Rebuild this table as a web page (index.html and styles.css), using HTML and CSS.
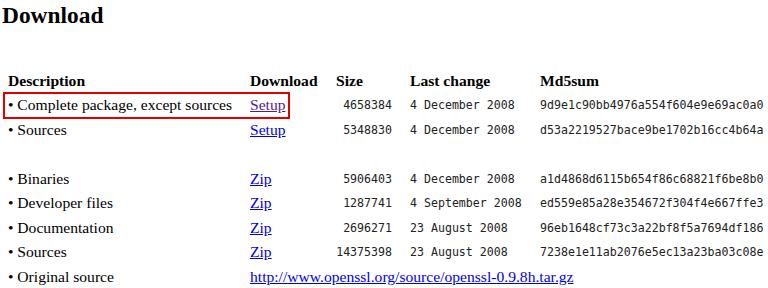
FILE: index.html
```html
<!DOCTYPE html>
<html>
<head>
<meta charset="utf-8">
<link rel="stylesheet" href="styles.css">
</head>
<body>
<h1 class="title">Download</h1>
<table class="dl">
  <colgroup>
    <col class="c-desc"><col class="c-dl"><col class="c-size"><col class="c-date"><col class="c-md5">
  </colgroup>
  <thead>
    <tr><th>Description</th><th>Download</th><th>Size</th><th>Last change</th><th>Md5sum</th></tr>
  </thead>
  <tbody>
    <tr><td>• Complete package, except sources</td><td><a class="visited" href="#">Setup</a></td><td class="size">4658384</td><td class="mono">4 December 2008</td><td class="mono">9d9e1c90bb4976a554f604e9e69ac0a0</td></tr>
    <tr><td>• Sources</td><td><a href="#">Setup</a></td><td class="size">5348830</td><td class="mono">4 December 2008</td><td class="mono">d53a2219527bace9be1702b16cc4b64a</td></tr>
    <tr><td colspan="5">&nbsp;</td></tr>
    <tr><td>• Binaries</td><td><a href="#">Zip</a></td><td class="size">5906403</td><td class="mono">4 December 2008</td><td class="mono">a1d4868d6115b654f86c68821f6be8b0</td></tr>
    <tr><td>• Developer files</td><td><a href="#">Zip</a></td><td class="size">1287741</td><td class="mono">4 September 2008</td><td class="mono">ed559e85a28e354672f304f4e667ffe3</td></tr>
    <tr><td>• Documentation</td><td><a href="#">Zip</a></td><td class="size">2696271</td><td class="mono">23 August 2008</td><td class="mono">96eb1648cf73c3a22bf8f5a7694df186</td></tr>
    <tr><td>• Sources</td><td><a href="#">Zip</a></td><td class="size">14375398</td><td class="mono">23 August 2008</td><td class="mono">7238e1e11ab2076e5ec13a23ba03c08e</td></tr>
    <tr><td>• Original source</td><td colspan="4"><a href="#">http://www.openssl.org/source/openssl-0.9.8h.tar.gz</a></td></tr>
  </tbody>
</table>
<div class="highlight"></div>
</body>
</html>
```
FILE: styles.css
```css
html, body {
  margin: 0;
  padding: 0;
  background: #fff;
}
body {
  font-family: "Liberation Serif", "Times New Roman", serif;
  font-size: 15.6px;
  color: #000;
  position: relative;
  width: 768px;
  height: 288px;
  overflow: hidden;
}
.title {
  font-size: 23.4px;
  font-weight: bold;
  margin: 2px 0 0 2px;
  line-height: 27.6px;
}
.dl {
  margin: 39px 0 0 8px;
  border-collapse: collapse;
  border-spacing: 0;
  table-layout: fixed;
  width: 760px;
  white-space: nowrap;
}
.c-desc { width: 242px; }
.c-dl { width: 86px; }
.c-size { width: 74px; }
.c-date { width: 130px; }
.c-md5 { width: 228px; }
.dl tr {
  height: 24.5px;
}
.dl th, .dl td {
  padding: 0;
  height: 24.5px;
  line-height: 18px;
  text-align: left;
  vertical-align: middle;
}
.dl th {
  font-weight: bold;
}
.mono, .size {
  font-family: "DejaVu Sans Mono", "Liberation Mono", monospace;
  font-size: 11.6px;
  color: #222;
}
.size {
  text-align: right !important;
  padding-right: 18px !important;
}
a {
  color: #0000ee;
  text-decoration: underline;
}
a.visited {
  color: #551a8b;
}
.highlight {
  position: absolute;
  left: 3px;
  top: 92px;
  width: 283px;
  height: 23px;
  border: 2px solid #e00000;
}
```
